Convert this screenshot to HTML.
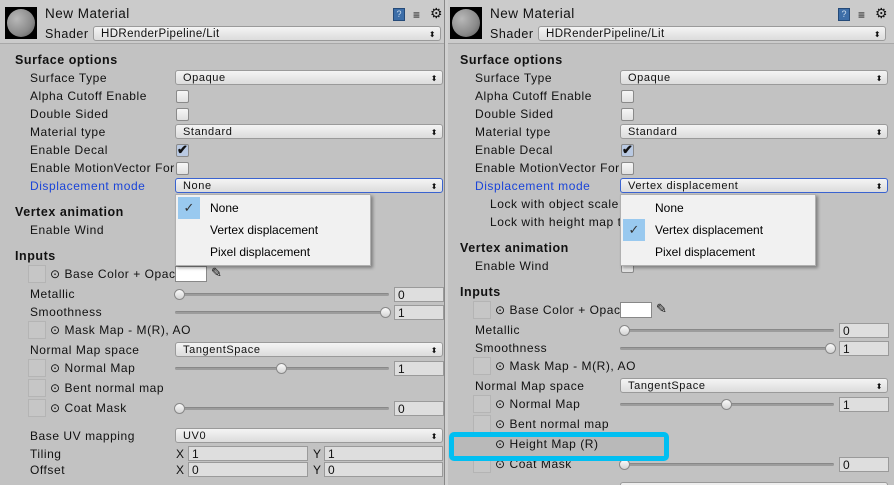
<!DOCTYPE html><html><head><meta charset="utf-8"><style>
*{margin:0;padding:0;box-sizing:border-box}
body{width:894px;height:485px;overflow:hidden;background:#c2c2c2;font-family:"Liberation Sans",sans-serif;font-size:12px;color:#111;position:relative}
.p{position:absolute;top:0;width:445px;height:485px;background:#c2c2c2;overflow:hidden}
.p div,.p span{position:absolute}
.hd{left:0;top:0;width:445px;height:44px;background:#cbcbcb;border-bottom:1px solid #a8a8a8}
.t{white-space:nowrap;letter-spacing:.55px;line-height:14px;height:14px}
.b{font-weight:bold;font-size:12.5px}
.dd{height:15px;border:1px solid #9a9a9a;border-radius:3px;background:linear-gradient(#f4f4f4,#dcdcdc);font-size:11px;letter-spacing:.6px;padding-left:7px;line-height:14px}
.dd:after{content:"⬍";position:absolute;right:4px;top:1px;font-size:8px}
.cb{width:13px;height:13px;border:1px solid #8a8a8a;border-radius:2px;background:linear-gradient(#f6f6f6,#e0e0e0)}
.sl{height:3px;background:#9c9c9c;border-radius:2px;border-top:1px solid #888}
.kn{width:11px;height:11px;border-radius:50%;background:linear-gradient(#fafafa,#d4d4d4);border:1px solid #888}
.nf{width:50px;height:15px;border:1px solid #9a9a9a;background:#dedede;font-size:12px;padding-left:3px;line-height:14px}
.ts{width:18px;height:18px;background:#c6c6c6;border:1px solid #b4b4b4}
.pop{background:#f1f1f1;border:1px solid #b0b0b0;box-shadow:2px 2px 3px rgba(0,0,0,.35);width:196px;height:72px}
.pi{font-size:12px;line-height:14px;white-space:nowrap;color:#000}
.ck{width:22px;height:22px;background:#99c9ef;color:#333;font-size:13px;text-align:center;line-height:22px}
</style></head><body>

<!-- LEFT PANEL -->
<div class="p" style="left:0">
<div class="hd"></div>
<div style="left:5px;top:7px;width:32px;height:32px;background:#000"><span style="left:2px;top:2px;width:28px;height:28px;border-radius:50%;background:radial-gradient(circle at 35% 35%,#b8b8b8,#8a8a8a 60%,#555)"></span></div>
<div class="t" style="left:45px;top:6px;font-size:13.5px;letter-spacing:.5px;height:16px;line-height:16px">New Material</div>
<div class="t" style="left:45px;top:27px;font-size:12.5px">Shader</div>
<div class="dd" style="left:93px;top:26px;width:348px;font-size:11.5px;letter-spacing:.4px">HDRenderPipeline/Lit</div>
<div style="left:393px;top:8px;width:12px;height:13px;background:#3d6ea8;border:1px solid #254a78;color:#cde;font-size:9px;text-align:center;line-height:11px">?</div>
<div style="left:413px;top:9px;font-size:12px;font-weight:bold;line-height:12px">≡</div>
<div style="left:430px;top:6px;font-size:14px;line-height:14px">⚙</div>
<div style="left:444px;top:0;width:1px;height:485px;background:#888"></div>

<div class="t b" style="left:15px;top:53px">Surface options</div>
<div class="t" style="left:30px;top:71px">Surface Type</div><div class="dd" style="left:175px;top:70px;width:268px">Opaque</div>
<div class="t" style="left:30px;top:89px">Alpha Cutoff Enable</div><div class="cb" style="left:176px;top:90px"></div>
<div class="t" style="left:30px;top:107px">Double Sided</div><div class="cb" style="left:176px;top:108px"></div>
<div class="t" style="left:30px;top:125px">Material type</div><div class="dd" style="left:175px;top:124px;width:268px">Standard</div>
<div class="t" style="left:30px;top:143px">Enable Decal</div><div class="cb" style="left:176px;top:144px;background:#b9c9e2;font-size:13px;line-height:10px;font-weight:bold">✔</div>
<div class="t" style="left:30px;top:161px;width:145px;overflow:hidden">Enable MotionVector For Vertex</div><div class="cb" style="left:176px;top:162px"></div>
<div class="t" style="left:30px;top:179px;color:#1a44d8">Displacement mode</div><div class="dd" style="left:175px;top:178px;width:268px;border-color:#3a63d0">None</div>

<div class="t b" style="left:15px;top:205px">Vertex animation</div>
<div class="t" style="left:30px;top:223px">Enable Wind</div>
<div class="t b" style="left:15px;top:249px">Inputs</div>
<div class="ts" style="left:28px;top:265px"></div><div class="t" style="left:50px;top:267px;width:125px;overflow:hidden">⊙ Base Color + Opacity</div>
<div style="left:175px;top:266px;width:32px;height:16px;background:#fff;border:1px solid #888"></div><div style="left:211px;top:265px;font-size:13px">✎</div>
<div class="t" style="left:30px;top:287px">Metallic</div><div class="sl" style="left:175px;top:293px;width:214px"></div><div class="kn" style="left:174px;top:289px"></div><div class="nf" style="left:394px;top:287px">0</div>
<div class="t" style="left:30px;top:305px">Smoothness</div><div class="sl" style="left:175px;top:311px;width:214px"></div><div class="kn" style="left:380px;top:307px"></div><div class="nf" style="left:394px;top:305px">1</div>
<div class="ts" style="left:28px;top:321px"></div><div class="t" style="left:50px;top:323px;width:140px;overflow:hidden">⊙ Mask Map - M(R), AO(G)</div>
<div class="t" style="left:30px;top:343px">Normal Map space</div><div class="dd" style="left:175px;top:342px;width:268px">TangentSpace</div>
<div class="ts" style="left:28px;top:359px"></div><div class="t" style="left:50px;top:361px">⊙ Normal Map</div><div class="sl" style="left:175px;top:367px;width:214px"></div><div class="kn" style="left:276px;top:363px"></div><div class="nf" style="left:394px;top:361px">1</div>
<div class="ts" style="left:28px;top:379px"></div><div class="t" style="left:50px;top:381px">⊙ Bent normal map</div>
<div class="ts" style="left:28px;top:399px"></div><div class="t" style="left:50px;top:401px">⊙ Coat Mask</div><div class="sl" style="left:175px;top:407px;width:214px"></div><div class="kn" style="left:174px;top:403px"></div><div class="nf" style="left:394px;top:401px">0</div>
<div class="t" style="left:30px;top:429px">Base UV mapping</div><div class="dd" style="left:175px;top:428px;width:268px">UV0</div>
<div class="t" style="left:30px;top:447px">Tiling</div><div class="t" style="left:176px;top:447px">X</div><div class="nf" style="left:188px;top:446px;width:120px">1</div><div class="t" style="left:313px;top:447px">Y</div><div class="nf" style="left:324px;top:446px;width:119px">1</div>
<div class="t" style="left:30px;top:463px">Offset</div><div class="t" style="left:176px;top:463px">X</div><div class="nf" style="left:188px;top:462px;width:120px">0</div><div class="t" style="left:313px;top:463px">Y</div><div class="nf" style="left:324px;top:462px;width:119px">0</div>

<div class="pop" style="left:175px;top:194px"></div>
<div class="ck" style="left:178px;top:197px">✓</div>
<div class="pi" style="left:210px;top:201px">None</div>
<div class="pi" style="left:210px;top:223px">Vertex displacement</div>
<div class="pi" style="left:210px;top:245px">Pixel displacement</div>
</div>

<!-- RIGHT PANEL -->
<div class="p" style="left:445px;width:449px">
<div class="hd" style="width:449px"></div>
<div style="left:0;top:0;width:3px;height:485px;background:#d0d0d0"></div>
<div style="left:5px;top:7px;width:32px;height:32px;background:#000"><span style="left:2px;top:2px;width:28px;height:28px;border-radius:50%;background:radial-gradient(circle at 35% 35%,#b8b8b8,#8a8a8a 60%,#555)"></span></div>
<div class="t" style="left:45px;top:6px;font-size:13.5px;letter-spacing:.5px;height:16px;line-height:16px">New Material</div>
<div class="t" style="left:45px;top:27px;font-size:12.5px">Shader</div>
<div class="dd" style="left:93px;top:26px;width:348px;font-size:11.5px;letter-spacing:.4px">HDRenderPipeline/Lit</div>
<div style="left:393px;top:8px;width:12px;height:13px;background:#3d6ea8;border:1px solid #254a78;color:#cde;font-size:9px;text-align:center;line-height:11px">?</div>
<div style="left:413px;top:9px;font-size:12px;font-weight:bold;line-height:12px">≡</div>
<div style="left:430px;top:6px;font-size:14px;line-height:14px">⚙</div>

<div class="t b" style="left:15px;top:53px">Surface options</div>
<div class="t" style="left:30px;top:71px">Surface Type</div><div class="dd" style="left:175px;top:70px;width:268px">Opaque</div>
<div class="t" style="left:30px;top:89px">Alpha Cutoff Enable</div><div class="cb" style="left:176px;top:90px"></div>
<div class="t" style="left:30px;top:107px">Double Sided</div><div class="cb" style="left:176px;top:108px"></div>
<div class="t" style="left:30px;top:125px">Material type</div><div class="dd" style="left:175px;top:124px;width:268px">Standard</div>
<div class="t" style="left:30px;top:143px">Enable Decal</div><div class="cb" style="left:176px;top:144px;background:#b9c9e2;font-size:13px;line-height:10px;font-weight:bold">✔</div>
<div class="t" style="left:30px;top:161px;width:145px;overflow:hidden">Enable MotionVector For Vertex</div><div class="cb" style="left:176px;top:162px"></div>
<div class="t" style="left:30px;top:179px;color:#1a44d8">Displacement mode</div><div class="dd" style="left:175px;top:178px;width:268px;border-color:#3a63d0">Vertex displacement</div>
<div class="t" style="left:45px;top:197px">Lock with object scale</div>
<div class="t" style="left:45px;top:215px;width:130px;overflow:hidden">Lock with height map tiling</div>

<div class="t b" style="left:15px;top:241px">Vertex animation</div>
<div class="t" style="left:30px;top:259px">Enable Wind</div><div class="cb" style="left:176px;top:260px"></div>
<div class="t b" style="left:15px;top:285px">Inputs</div>
<div class="ts" style="left:28px;top:301px"></div><div class="t" style="left:50px;top:303px;width:125px;overflow:hidden">⊙ Base Color + Opacity</div>
<div style="left:175px;top:302px;width:32px;height:16px;background:#fff;border:1px solid #888"></div><div style="left:211px;top:301px;font-size:13px">✎</div>
<div class="t" style="left:30px;top:323px">Metallic</div><div class="sl" style="left:175px;top:329px;width:214px"></div><div class="kn" style="left:174px;top:325px"></div><div class="nf" style="left:394px;top:323px">0</div>
<div class="t" style="left:30px;top:341px">Smoothness</div><div class="sl" style="left:175px;top:347px;width:214px"></div><div class="kn" style="left:380px;top:343px"></div><div class="nf" style="left:394px;top:341px">1</div>
<div class="ts" style="left:28px;top:357px"></div><div class="t" style="left:50px;top:359px;width:140px;overflow:hidden">⊙ Mask Map - M(R), AO(G)</div>
<div class="t" style="left:30px;top:379px">Normal Map space</div><div class="dd" style="left:175px;top:378px;width:268px">TangentSpace</div>
<div class="ts" style="left:28px;top:395px"></div><div class="t" style="left:50px;top:397px">⊙ Normal Map</div><div class="sl" style="left:175px;top:403px;width:214px"></div><div class="kn" style="left:276px;top:399px"></div><div class="nf" style="left:394px;top:397px">1</div>
<div class="ts" style="left:28px;top:415px"></div><div class="t" style="left:50px;top:417px">⊙ Bent normal map</div>
<div class="ts" style="left:28px;top:455px"></div><div class="t" style="left:50px;top:457px">⊙ Coat Mask</div><div class="sl" style="left:175px;top:463px;width:214px"></div><div class="kn" style="left:174px;top:459px"></div><div class="nf" style="left:394px;top:457px">0</div>
<div style="left:175px;top:482px;width:268px;height:6px;border:1px solid #9a9a9a;border-radius:3px;background:#eee"></div>
<div style="left:4px;top:432px;width:220px;height:29px;border:5px solid #00bff2;border-radius:5px;background:#b9b9b9"></div>
<div class="t" style="left:50px;top:437px">⊙ Height Map (R)</div>

<div class="pop" style="left:175px;top:194px"></div>
<div class="ck" style="left:178px;top:219px">✓</div>
<div class="pi" style="left:210px;top:201px">None</div>
<div class="pi" style="left:210px;top:223px">Vertex displacement</div>
<div class="pi" style="left:210px;top:245px">Pixel displacement</div>
</div>
</body></html>
